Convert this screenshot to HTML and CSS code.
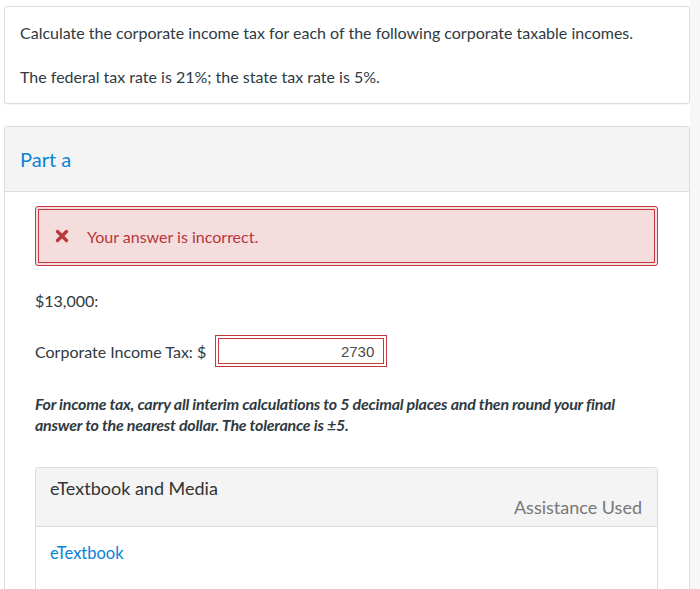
FILE: index.html
```html
<!DOCTYPE html>
<html>
<head>
<meta charset="utf-8">
<link rel="stylesheet" href="styles.css">
</head>
<body>
<div class="page">
  <main class="main">
    <section class="card intro">
      <p>Calculate the corporate income tax for each of the following corporate taxable incomes.</p>
      <p class="second">The federal tax rate is 21%; the state tax rate is 5%.</p>
    </section>

    <section class="card part">
      <header class="part-head">Part a</header>
      <div class="part-body">
        <div class="alert">
          <div class="alert-inner">
            <svg class="x-icon" viewBox="0 0 14 14" width="14" height="14"><path d="M2.5 2.5 L11.5 11.5 M11.5 2.5 L2.5 11.5" stroke="#b83a3c" stroke-width="3.4" stroke-linecap="round"/></svg>
            <span>Your answer is incorrect.</span>
          </div>
        </div>

        <p class="amount">$13,000:</p>

        <div class="tax-row">
          <span class="label">Corporate Income Tax: $</span>
          <div class="field"><div class="field-inner">2730</div></div>
        </div>

        <p class="note">For income tax, carry all interim calculations to 5 decimal places and then round your final answer to the nearest dollar. The tolerance is ±5.</p>

        <div class="media">
          <div class="media-head">
            <div class="media-title">eTextbook and Media</div>
            <div class="media-used">Assistance Used</div>
          </div>
          <div class="media-body">
            <a class="link" href="#">eTextbook</a>
          </div>
        </div>
      </div>
    </section>
  </main>
  <div class="gutter"></div>
</div>
</body>
</html>
```

FILE: styles.css
```css
html, body {
  margin: 0;
  padding: 0;
  background: #ffffff;
}
body {
  font-family: Lato, "Open Sans", Arial, sans-serif;
  color: #2f3a42;
  font-size: 16px;
}
.page {
  display: flex;
  width: 700px;
  height: 589px;
  overflow: hidden;
}
.main {
  width: 686px;
  padding: 6px 0 0 4px;
  flex: none;
}
.gutter {
  flex: 1;
  background: #f7f7f7;
}
.card {
  border: 1px solid #dcdcdc;
  border-radius: 3px;
  box-shadow: 0 1px 1px rgba(0,0,0,0.04);
  background: #fff;
}
.intro {
  padding: 15px 15px 15px 15px;
}
.intro p {
  margin: 0;
  line-height: 22px;
}
.intro .second {
  margin-top: 22px;
}
.part {
  margin-top: 22px;
  border-bottom: none;
  border-radius: 3px 3px 0 0;
  height: 470px;
}
.part-head {
  background: #f4f4f4;
  border-bottom: 1px solid #dcdcdc;
  padding: 19px 15px 19px 15px;
  font-size: 20px;
  line-height: 26px;
  color: #0a83d8;
}
.part-body {
  padding: 14px 31px 0 30px;
}
.alert {
  border: 1px solid #c4393d;
  border-radius: 3px;
  padding: 2px;
  background: #f5dcdd;
}
.alert-inner {
  border: 1px solid #c4393d;
  height: 52px;
  display: flex;
  align-items: center;
  padding-left: 17px;
  color: #b5373b;
  font-size: 16px;
}
.x-icon {
  margin-right: 18px;
  margin-left: -1px;
}
.amount {
  margin: 24px 0 0 0;
  line-height: 22px;
}
.tax-row {
  display: flex;
  align-items: center;
  margin-top: 23px;
  height: 32px;
}
.label {
  margin-right: 9px;
}
.field {
  border: 1px solid #c4393d;
  padding: 2px;
  box-sizing: border-box;
  height: 32px;
  width: 172px;
}
.field-inner {
  border: 1px solid #c4393d;
  height: 100%;
  box-sizing: border-box;
  display: flex;
  align-items: center;
  justify-content: flex-end;
  padding-right: 9px;
  font-family: "Liberation Sans", Arial, sans-serif;
  font-size: 15px;
  color: #4a4a4a;
}
.note {
  margin: 26px 0 0 0;
  font-style: italic;
  font-weight: bold;
  font-size: 16px;
  line-height: 21px;
  letter-spacing: -0.23px;
  color: #2f3a42;
}
.media {
  margin-top: 32px;
  border: 1px solid #dcdcdc;
  border-bottom: none;
  border-radius: 3px 3px 0 0;
  height: 140px;
}
.media-head {
  background: #f4f4f4;
  border-bottom: 1px solid #dcdcdc;
  height: 59px;
  padding: 0 15px 0 14px;
  box-sizing: border-box;
  display: flex;
  flex-direction: column;
}
.media-title {
  font-size: 18px;
  line-height: 22px;
  margin-top: 9px;
  color: #333;
}
.media-used {
  align-self: flex-end;
  font-size: 18px;
  line-height: 22px;
  color: #777;
  margin-top: -3px;
}
.media-body {
  padding: 15px 14px;
}
.link {
  color: #0a83d8;
  text-decoration: none;
  font-size: 16.5px;
  line-height: 22px;
}
```
